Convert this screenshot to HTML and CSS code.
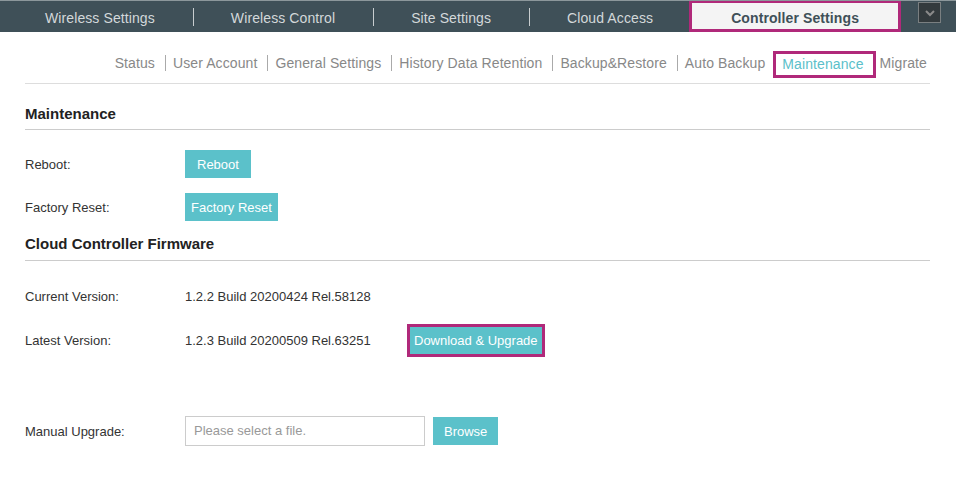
FILE: index.html
```html
<!DOCTYPE html>
<html>
<head>
<meta charset="utf-8">
<link rel="stylesheet" href="styles.css">
</head>
<body>
<div class="topbar">
  <div class="tabs">
    <div class="tab">Wireless Settings</div>
    <div class="tab sep">Wireless Control</div>
    <div class="tab sep">Site Settings</div>
    <div class="tab sep">Cloud Access</div>
    <div class="tab active">Controller Settings</div>
  </div>
  <div class="dropdown">
    <svg width="12" height="8" viewBox="0 0 12 8"><path d="M2 2 L6 6 L10 2" fill="none" stroke="#8a8a8a" stroke-width="2"/></svg>
  </div>
</div>
<div class="content">
  <div class="subnav">
    <span class="sub first">Status</span>
    <span class="sub">User Account</span>
    <span class="sub">General Settings</span>
    <span class="sub">History Data Retention</span>
    <span class="sub">Backup&amp;Restore</span>
    <span class="sub">Auto Backup</span>
    <span class="sub current">Maintenance</span>
    <span class="sub last">Migrate</span>
  </div>

  <div class="section">
    <h2 class="heading">Maintenance</h2>
    <div class="row r-reboot">
      <div class="label">Reboot:</div>
      <button class="btn">Reboot</button>
    </div>
    <div class="row r-reset">
      <div class="label">Factory Reset:</div>
      <button class="btn">Factory Reset</button>
    </div>
  </div>

  <div class="section">
    <h2 class="heading h2b">Cloud Controller Firmware</h2>
    <div class="row r-current">
      <div class="label">Current Version:</div>
      <div class="value">1.2.2 Build 20200424 Rel.58128</div>
    </div>
    <div class="row r-latest">
      <div class="label">Latest Version:</div>
      <div class="value">1.2.3 Build 20200509 Rel.63251</div>
      <div class="highlight"><button class="btn btn-dl">Download &amp; Upgrade</button></div>
    </div>
    <div class="row r-manual">
      <div class="label">Manual Upgrade:</div>
      <div class="file">Please select a file.</div>
      <button class="btn btn-browse">Browse</button>
    </div>
  </div>
</div>
</body>
</html>
```
FILE: styles.css
```css
* { box-sizing: border-box; }
body {
  margin: 0;
  background: #ffffff;
  font-family: "Liberation Sans", Arial, sans-serif;
  color: #333333;
}
.topbar {
  height: 32px;
  background: #3f5058;
  border-top: 1px solid #8c979b;
  display: flex;
  align-items: flex-start;
}
.tabs {
  display: flex;
  padding-left: 7px;
  height: 31px;
  flex: none;
}
.tab {
  position: relative;
  flex: none;
  padding: 3px 38px 0;
  font-size: 14px;
  line-height: 28px;
  letter-spacing: 0.1px;
  color: #d3d8da;
  white-space: nowrap;
}
.tab.sep::before {
  content: "";
  position: absolute;
  left: 0;
  top: 7px;
  height: 18px;
  border-left: 1px solid #c8cdcf;
}
.tab.active {
  margin-left: -2px;
  width: 212px;
  height: 31px;
  padding: 4px 0 0;
  text-align: center;
  background: #f4f4f4;
  border: 3px solid #b0297a;
  border-top-width: 2px;
  line-height: 22px;
  font-weight: bold;
  color: #3f5058;
}
.dropdown {
  margin-left: auto;
  margin-right: 15px;
  margin-top: 1px;
  width: 23px;
  height: 21px;
  background: #333a3d;
  border: 1px solid #7a7f81;
  display: flex;
  align-items: center;
  justify-content: center;
}
.content {
  padding: 0 26px 0 25px;
}
.subnav {
  display: flex;
  justify-content: flex-end;
  align-items: center;
  padding-top: 19px;
  height: 52px;
  padding-bottom: 9px;
  border-bottom: 1px solid #dddddd;
  font-size: 14px;
  letter-spacing: 0.1px;
  color: #888888;
}
.sub {
  padding-left: 7px;
  margin-left: 10px;
  border-left: 1px solid #aaaaaa;
  line-height: 16px;
  white-space: nowrap;
}
.sub.first {
  border-left: none;
  padding-left: 0;
  margin-left: 0;
}
.sub.current {
  border: 3px solid #b0297a;
  color: #5bbfca;
  padding: 1px 9px 2px 6px;
  line-height: 18px;
  margin-left: 8px;
  margin-top: 4px;
}
.sub.last {
  border-left: none;
  padding-left: 0;
  margin-left: 4px;
  margin-right: 3px;
}
.heading {
  margin: 0;
  font-size: 15px;
  font-weight: bold;
  color: #222222;
  padding-top: 21px;
  padding-bottom: 6px;
  border-bottom: 1px solid #cccccc;
  line-height: 18px;
}
.h2b {
  padding-top: 14px;
  padding-bottom: 7px;
}
.row {
  display: flex;
  align-items: center;
  font-size: 13px;
}
.label {
  width: 160px;
  color: #333333;
}
.value {
  color: #333333;
  width: 222px;
}
.btn {
  font-family: "Liberation Sans", Arial, sans-serif;
  font-size: 13px;
  color: #ffffff;
  background: #5bc1ca;
  border: none;
  padding: 0 12px;
  height: 28px;
  margin: 0;
}
.r-reboot { margin-top: 20px; }
.r-reset { margin-top: 15px; }
.r-reset .btn { padding: 0 6px; }
.r-current { margin-top: 26px; height: 18px; }
.r-latest { margin-top: 19px; }
.highlight {
  border: 3px solid #b0297a;
}
.btn-dl {
  display: block;
  height: 27px;
  padding: 0 4px;
}
.r-manual { margin-top: 59px; }
.file {
  width: 240px;
  height: 30px;
  border: 1px solid #cccccc;
  padding-left: 8px;
  line-height: 28px;
  color: #999999;
  margin-right: 8px;
}
.btn-browse {
  height: 28px;
  padding: 0 11px;
}
```
